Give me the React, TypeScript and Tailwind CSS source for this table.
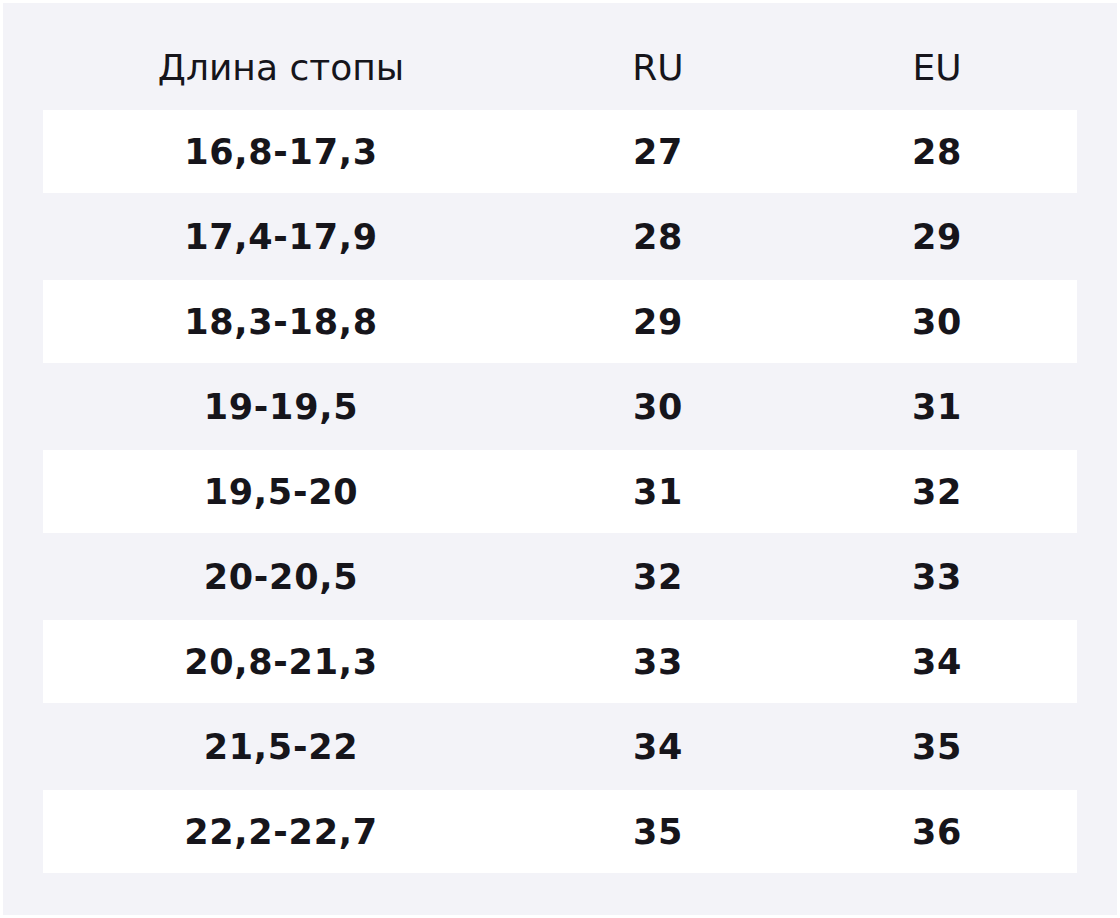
import React from 'react';

const rows: [string, string, string][] = [
  ['16,8-17,3', '27', '28'],
  ['17,4-17,9', '28', '29'],
  ['18,3-18,8', '29', '30'],
  ['19-19,5', '30', '31'],
  ['19,5-20', '31', '32'],
  ['20-20,5', '32', '33'],
  ['20,8-21,3', '33', '34'],
  ['21,5-22', '34', '35'],
  ['22,2-22,7', '35', '36'],
];

const App: React.FC = () => {
  return (
    <div className="min-h-screen bg-white p-[3px] font-['DejaVu_Sans',sans-serif] text-[#16151b]">
      <div className="bg-[#f3f3f8] px-[40px] pt-[22px] pb-[42px]">
        {/* Шапка таблицы */}
        <div className="grid h-[85px] grid-cols-[476px_278px_1fr] items-center text-center text-[36px]">
          <div>Длина стопы</div>
          <div>RU</div>
          <div>EU</div>
        </div>

        {rows.map(([foot, ru, eu], i) => (
          <div
            key={foot}
            className={
              i % 2 === 0
                ? 'grid h-[83px] grid-cols-[476px_278px_1fr] items-center bg-white pt-[1px] text-center text-[35px] font-bold tracking-[0.7px]'
                : 'grid h-[87px] grid-cols-[476px_278px_1fr] items-center pt-[1px] text-center text-[35px] font-bold tracking-[0.7px]'
            }
          >
            <div>{foot}</div>
            <div>{ru}</div>
            <div>{eu}</div>
          </div>
        ))}
      </div>
    </div>
  );
};

export default App;
